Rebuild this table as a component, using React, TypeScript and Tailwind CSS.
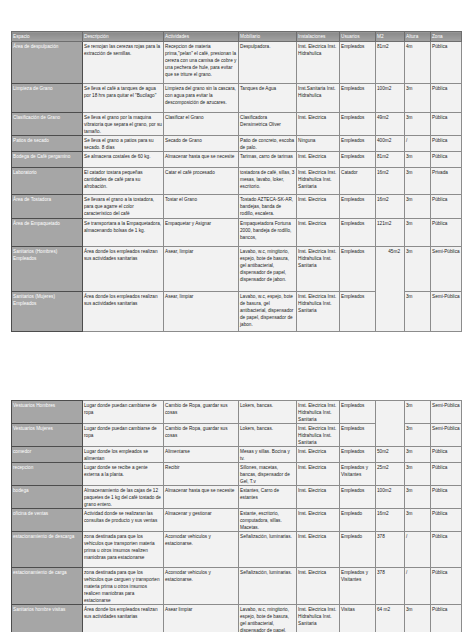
type Row = {
  h: string;
  espacio: string;
  desc: string;
  act: string;
  mob: string;
  inst: string;
  usu: string;
  m2?: string;
  m2Span?: number;
  alt: string;
  zona: string;
};

// tabla 1
const topRows: Row[] = [
  {
    h: 'h-[42px]',
    espacio: 'Área de despulpación',
    desc: 'Se remojan las cerezas rojas para la extracción de semillas.',
    act: 'Recepcion de materia prima,"pelan" el café, presionan la cereza con una camisa de cobre y una pechera de hule, para evitar que se triture el grano.',
    mob: 'Despulpadora.',
    inst: 'Inst. Electrica Inst. Hidrahulica',
    usu: 'Empleados',
    m2: '81m2',
    alt: '4m',
    zona: 'Pública',
  },
  {
    h: 'h-[29px]',
    espacio: 'Limpieza de Grano',
    desc: 'Se lleva el café a tanques de agua por 18 hrs para quitar el "Bucilago"',
    act: 'Limpieza del grano sin la cascara, con agua para evitar la descomposición de azucares.',
    mob: 'Tanques de Agua',
    inst: 'Inst.Sanitaria Inst. Hidrahulica',
    usu: 'Empleados',
    m2: '100m2',
    alt: '3m',
    zona: 'Pública',
  },
  {
    h: 'h-[23px]',
    espacio: 'Clasificación de Grano',
    desc: 'Se lleva el grano por la maquina vibratoria que separa el grano, por su tamaño.',
    act: 'Clasificar el Grano',
    mob: 'Clasificadora Densimetrica Oliver',
    inst: 'Inst. Electrica',
    usu: 'Empleados',
    m2: '49m2',
    alt: '3m',
    zona: 'Pública',
  },
  {
    h: 'h-[15px]',
    espacio: 'Patios de secado',
    desc: 'Se lleva el grano a patios para su secado. 8 días',
    act: 'Secado de Grano',
    mob: 'Patio de concreto, escoba de palo.',
    inst: 'Ninguna',
    usu: 'Empleados',
    m2: '400m2',
    alt: '/',
    zona: 'Pública',
  },
  {
    h: 'h-[16px]',
    espacio: 'Bodega de Café pergamino',
    desc: 'Se almacena costales de 60 kg.',
    act: 'Almacenar hasta que se necesite',
    mob: 'Tarimas, carro de tarimas',
    inst: 'Inst. Electrica',
    usu: 'Empleados',
    m2: '81m2',
    alt: '3m',
    zona: 'Pública',
  },
  {
    h: 'h-[27px]',
    espacio: 'Laboratorio',
    desc: 'El catador tostara pequeñas cantidades de café para su afrobación.',
    act: 'Catar el café procesado',
    mob: 'tostadora de café, sillas, 3 mesas, lavabo, loker, escritorio.',
    inst: 'Inst. Electrica Inst. Hidrahulica Inst. Sanitaria',
    usu: 'Catador',
    m2: '16m2',
    alt: '3m',
    zona: 'Privada',
  },
  {
    h: 'h-[24px]',
    espacio: 'Área de Tostadora',
    desc: 'Se llevara el grano a la tostadora, para que agarre el color característico del café',
    act: 'Tostar el Grano',
    mob: 'Tostado AZTECA-SK-AR, bandejas, banda de rodillo, escalera.',
    inst: 'Inst. Electrica',
    usu: 'Empleados',
    m2: '16m2',
    alt: '3m',
    zona: 'Pública',
  },
  {
    h: 'h-[28px]',
    espacio: 'Área de Empaquetado',
    desc: 'Se transportara a la Empaquetadora, almacenando bolsas de 1 kg.',
    act: 'Empaquetar y Asignar',
    mob: 'Empaquetadora Fortuna 2000, bandeja de rodillo, bancos,',
    inst: 'Inst. Electrica',
    usu: 'Empleados',
    m2: '121m2',
    alt: '3m',
    zona: 'Pública',
  },
  {
    h: 'h-[45px]',
    espacio: 'Sanitarios (Hombres)\nEmpleados',
    desc: 'Área donde los empleados realizan sus actividades sanitarias',
    act: 'Asear, limpiar',
    mob: 'Lavabo, w.c, mingitorio, espejo, bote de basura, gel antibacterial, dispensador de papel, dispensador de jabon.',
    inst: 'Inst. Electrica Inst. Hidrahulica Inst. Sanitaria',
    usu: 'Empleados',
    m2: '45m2',
    m2Span: 2,
    alt: '3m',
    zona: 'Semi-Pública',
  },
  {
    h: 'h-[40px]',
    espacio: 'Sanitarios (Mujeres)\nEmpleados',
    desc: 'Área donde los empleados realizan sus actividades sanitarias',
    act: 'Asear, limpiar',
    mob: 'Lavabo, w.c, espejo, bote de basura, gel antibacterial, dispensador de papel, dispensador de jabon.',
    inst: 'Inst. Electrica Inst. Hidrahulica Inst. Sanitaria',
    usu: 'Empleados',
    alt: '3m',
    zona: 'Semi-Pública',
  },
];

// tabla 2
const bottomRows: Row[] = [
  {
    h: 'h-[23px]',
    espacio: 'Vestuarios Hombres',
    desc: 'Lugar donde puedan cambiarse de ropa',
    act: 'Cambio de  Ropa, guardar sus cosas',
    mob: 'Lokers, bancas.',
    inst: 'Inst. Electrica Inst. Hidrahulica Inst. Sanitaria',
    usu: 'Empleados',
    m2: '',
    m2Span: 2,
    alt: '3m',
    zona: 'Semi-Pública',
  },
  {
    h: 'h-[22px]',
    espacio: 'Vestuarios Mujeres',
    desc: 'Lugar donde puedan cambiarse de ropa',
    act: 'Cambio de  Ropa, guardar sus cosas',
    mob: 'Lokers, bancas.',
    inst: 'Inst. Electrica Inst. Hidrahulica Inst. Sanitaria',
    usu: 'Empleados',
    alt: '3m',
    zona: 'Semi-Pública',
  },
  {
    h: 'h-[15px]',
    espacio: 'comedor',
    desc: 'Lugar donde los empleados se alimentan',
    act: 'Alimentarse',
    mob: 'Mesas y sillas. Bocina y tv.',
    inst: 'Inst. Electrica',
    usu: 'Empleados',
    m2: '50m2',
    alt: '3m',
    zona: 'Pública',
  },
  {
    h: 'h-[21px]',
    espacio: 'recepcion',
    desc: 'Lugar donde se recibe a gente externa a la planta.',
    act: 'Recibir',
    mob: 'Sillones, macetas, bancas, dispensador de Gel, T.v',
    inst: 'Inst. Electrica',
    usu: 'Empleados y Visitantes',
    m2: '25m2',
    alt: '3m',
    zona: 'Pública',
  },
  {
    h: 'h-[22px]',
    espacio: 'bodega',
    desc: 'Almacenamiento de las cajas de 12 paquetes de 1 kg del café tostado de grano entero.',
    act: 'Almacenar hasta que se necesite',
    mob: 'Estantes, Carro de estantes',
    inst: 'Inst. Electrica',
    usu: 'Empleados',
    m2: '100m2',
    alt: '3m',
    zona: 'Pública',
  },
  {
    h: 'h-[23px]',
    espacio: 'oficina de ventas',
    desc: 'Actividad donde se realizaran las consultas de producto y sus ventas',
    act: 'Almacenar y gestionar',
    mob: 'Estante, escritorio, computadora, sillas. Macetas.',
    inst: 'Inst. Electrica',
    usu: 'Empleado',
    m2: '16m2',
    alt: '3m',
    zona: 'Pública',
  },
  {
    h: 'h-[36px]',
    espacio: 'estacionamiento de descarga',
    desc: 'zona destinada para que los vehiculos que transporten materia prima u otros insumos realizen maniobras para estacionarse',
    act: 'Acomodar vehiculos y estacionarse.',
    mob: 'Señalización, luminarias.',
    inst: 'Inst. Electrica',
    usu: 'Empleado',
    m2: '378',
    alt: '/',
    zona: 'Pública',
  },
  {
    h: 'h-[37px]',
    espacio: 'estacionamiento de carga',
    desc: 'zona destinada para que los vehiculos que carguen y transporten materia prima u otros insumos realicen maniobras para estacionarse',
    act: 'Acomodar vehiculos y estacionarse.',
    mob: 'Señalización, luminarias.',
    inst: 'Inst. Electrica',
    usu: 'Empleados y Visitantes',
    m2: '378',
    alt: '/',
    zona: 'Pública',
  },
  {
    h: 'h-[45px]',
    espacio: 'Sanitarios hombre visitas',
    desc: 'Área donde los empleados realizan sus actividades sanitarias',
    act: 'Asear limpiar',
    mob: 'Lavabo, w.c, mingitorio, espejo, bote de basura, gel antibacterial, dispensador de papel, dispensador de jabon.',
    inst: 'Inst. Electrica Inst. Hidrahulica Inst. Sanitaria',
    usu: 'Visitas',
    m2: '64 m2',
    alt: '3m',
    zona: 'Pública',
  },
];

const headers = ['Espacio', 'Descripción', 'Actividades', 'Mobiliario', 'Instalaciones', 'Usuarios', 'M2', 'Altura', 'Zona'];

const cell = 'border border-[#8c8c8c] bg-[#f2f2f2] align-top px-[1px] pt-[1px] text-[#222]';
const first = 'border border-[#4d4d4d] bg-[#a6a6a6] align-top px-[1px] pt-[1px] text-white whitespace-pre-line';

function Cols() {
  return (
    <colgroup>
      <col className="w-[71px]" />
      <col className="w-[81px]" />
      <col className="w-[75px]" />
      <col className="w-[58px]" />
      <col className="w-[43px]" />
      <col className="w-[36px]" />
      <col className="w-[29px]" />
      <col className="w-[26px]" />
      <col className="w-[31px]" />
    </colgroup>
  );
}

function Body({ rows }: { rows: Row[] }) {
  return (
    <tbody>
      {rows.map((r) => (
        <tr key={r.espacio} className={r.h}>
          <td className={first}>{r.espacio}</td>
          <td className={cell}>{r.desc}</td>
          <td className={cell}>{r.act}</td>
          <td className={cell}>{r.mob}</td>
          <td className={cell}>{r.inst}</td>
          <td className={cell}>{r.usu}</td>
          {r.m2 !== undefined && (
            <td rowSpan={r.m2Span ?? 1} className={`${cell} ${r.m2Span ? 'text-right pr-[4px]' : ''}`}>
              {r.m2}
            </td>
          )}
          <td className={cell}>{r.alt}</td>
          <td className={cell}>{r.zona}</td>
        </tr>
      ))}
    </tbody>
  );
}

export default function App() {
  return (
    <div
      className="w-[474px] h-[632px] overflow-hidden bg-white pl-[11px] pt-[31px] text-[4.7px] leading-[7px]"
      style={{ fontFamily: '"Liberation Sans", Arial, sans-serif' }}
    >
      <table className="table-fixed border-collapse w-[450px]">
        <Cols />
        <thead>
          <tr className="h-[10px]">
            {headers.map((h) => (
              <th
                key={h}
                className="border border-[#6e6e6e] bg-gradient-to-b from-[#8a8a8a] to-[#a3a3a3] text-white font-normal text-left align-top px-[1px] pt-[1px]"
              >
                {h}
              </th>
            ))}
          </tr>
        </thead>
        <Body rows={topRows} />
      </table>

      <table className="table-fixed border-collapse w-[450px] mt-[68px]">
        <Cols />
        <Body rows={bottomRows} />
      </table>
    </div>
  );
}
